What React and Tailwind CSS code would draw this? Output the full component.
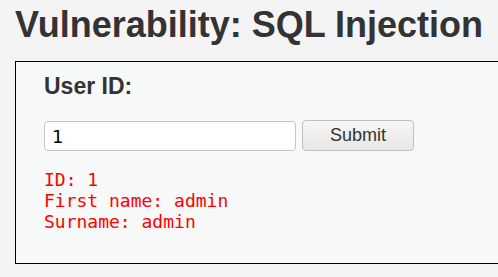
export default function App() {
  return (
    <div className="min-h-screen w-full overflow-hidden bg-[#f4f4f4] font-['Liberation_Sans',Arial,sans-serif] text-[#333]">
      <h1 className="pl-[15px] pt-[4px] text-[36px] font-bold leading-[41px] whitespace-nowrap">
        Vulnerability: SQL Injection
      </h1>

      <div className="ml-[15px] mt-[16px] w-[560px] border border-black bg-[#f7f8f8] pl-[28px] pt-[11px] pb-[31px]">
        <form onSubmit={(e) => e.preventDefault()}>
          <p className="text-[23px] font-bold leading-[26px]">User ID:</p>

          <div className="mt-[21px] flex items-end gap-[6px]">
            <input
              type="text"
              defaultValue="1"
              className="h-[30px] w-[252px] rounded-[4px] border border-[#c9c5c1] bg-white px-[7px] font-['DejaVu_Sans',sans-serif] text-[18px] text-black outline-none"
            />
            <button
              type="submit"
              className="h-[31px] w-[112px] rounded-[4px] border border-[#c3bfbb] bg-gradient-to-b from-[#f7f6f5] to-[#e9e7e4] text-[18px] text-[#2e3436]"
            >
              Submit
            </button>
          </div>
        </form>

        <pre className="mt-[18px] font-['DejaVu_Sans_Mono',monospace] text-[18px] leading-[21px] text-[#ff0000]">
          {"ID: 1\nFirst name: admin\nSurname: admin"}
        </pre>
      </div>
    </div>
  );
}
